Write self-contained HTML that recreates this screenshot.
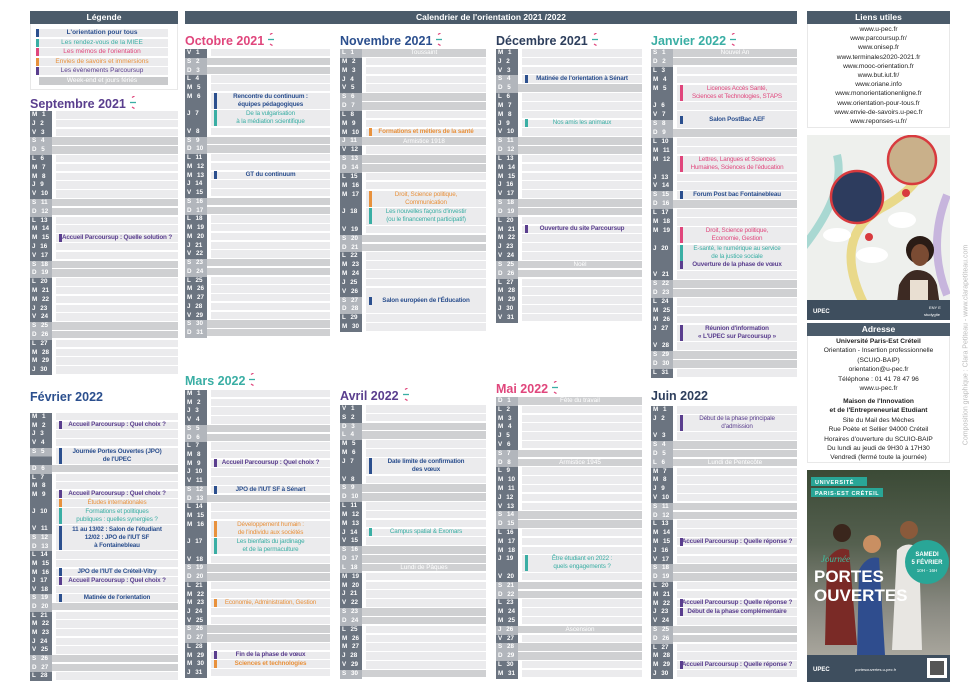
<!DOCTYPE html>
<html><head><meta charset="utf-8"><style>
*{margin:0;padding:0;box-sizing:border-box}
body{width:980px;height:693px;background:#fff;position:relative;overflow:hidden;font-family:"Liberation Sans",sans-serif}
.hd{position:absolute;height:13px;background:#4b5b6a;color:#fff;font:bold 8.5px/13px "Liberation Sans",sans-serif;text-align:center}
.m{position:absolute}
.r{display:flex;height:var(--r)}
.r.d{height:calc(var(--r)*2)}
.r.t{height:calc(var(--r)*3)}
.r b{width:22px;flex:none;background:#6b7480;color:#fff;font:bold 6.3px/var(--r) "Liberation Sans",sans-serif;padding-left:2px;word-spacing:3px;white-space:pre}
.r i{flex:1;margin-left:4px;background:#ebebed;margin-bottom:1.3px;font-style:normal;display:flex;flex-direction:column;justify-content:center;color:#fff;text-align:center;font:6.3px/7px "Liberation Sans",sans-serif}
.r.e b,.r.w b{background:#b2b6bc}
.r.e i{margin-left:0;background:#cfd0d2}
em{display:block;position:relative;font:bold 6.3px/8px "Liberation Sans",sans-serif;font-style:normal;letter-spacing:-.15px;white-space:nowrap;text-align:center}
em:before{content:"";position:absolute;left:3px;top:0;bottom:0;width:2.5px;background:currentColor}
.c1{color:#2b4f8e}.c2{color:#3aaea4}.c3{color:#e0467c}.c4{color:#e8913c}.c5{color:#5a3e8e}
.o{position:absolute;background:#ebebed;display:flex;flex-direction:column;justify-content:center}
.ti{position:absolute;font:bold 12.5px "Liberation Sans",sans-serif;white-space:nowrap}
.ti svg{vertical-align:-1px;margin-left:3px}
.lg{position:absolute;left:36px;width:132px;height:8px;background:#ebebed;text-align:center;font:bold 6.5px/8px "Liberation Sans",sans-serif}
.lg:before{content:"";position:absolute;left:0;top:0;width:2.5px;height:8px;background:currentColor}
.txt{position:absolute;text-align:center;font:6.6px/9.3px "Liberation Sans",sans-serif;color:#222}
.vt{position:absolute;left:966px;top:345px;transform:translate(-50%,-50%) rotate(-90deg);white-space:nowrap;font:7px "Liberation Sans",sans-serif;color:#bcbcbc}
</style></head><body>

<div class="hd" style="left:30px;top:11px;width:148px">Légende</div>
<div style="position:absolute;left:30px;top:24px;width:148px;height:66px;border:1.5px solid #e8e8e8;border-top:none"></div>
<div class="lg c1" style="top:29px">L'orientation pour tous</div>
<div class="lg c2" style="top:38.5px;font-weight:normal">Les rendez-vous de la MIEE</div>
<div class="lg c3" style="top:48px;font-weight:normal">Les mémos de l'orientation</div>
<div class="lg c4" style="top:57.5px;font-weight:normal">Envies de savoirs et immersions</div>
<div class="lg c5" style="top:67px;font-weight:normal">Les évènements Parcoursup</div>
<div class="lg" style="top:76.5px;background:#c9cacc;color:#fff;font-weight:normal">Week-end et jours fériés</div>
<div class="hd" style="left:185px;top:11px;width:612px">Calendrier de l'orientation 2021 /2022</div>

<svg width="0" height="0" style="position:absolute"><defs><g id="sq"><path d="M3 1.5l2.5-1.5" stroke="#e0467c" stroke-width="1.3"/><path d="M1 6.5h6" stroke="#3aaea4" stroke-width="1.3"/><path d="M3 11l2.5 1.5" stroke="#e0467c" stroke-width="1.3"/></g></defs></svg>

<!-- SEPTEMBRE -->
<div class="ti c5" style="left:30px;top:96px">Septembre 2021<svg width="9" height="13"><use href="#sq"/></svg></div>
<div class="m" style="left:30px;top:111px;width:148px;--r:8.8px">
<div class="r"><b>M 1</b><i></i></div><div class="r"><b>J 2</b><i></i></div><div class="r"><b>V 3</b><i></i></div>
<div class="r e"><b>S 4</b><i></i></div><div class="r e"><b>D 5</b><i></i></div>
<div class="r"><b>L 6</b><i></i></div><div class="r"><b>M 7</b><i></i></div><div class="r"><b>M 8</b><i></i></div><div class="r"><b>J 9</b><i></i></div><div class="r"><b>V 10</b><i></i></div>
<div class="r e"><b>S 11</b><i></i></div><div class="r e"><b>D 12</b><i></i></div>
<div class="r"><b>L 13</b><i></i></div><div class="r"><b>M 14</b><i></i></div><div class="r"><b>M 15</b><i><em class="c5">Accueil Parcoursup : Quelle solution ?</em></i></div><div class="r"><b>J 16</b><i></i></div><div class="r"><b>V 17</b><i></i></div>
<div class="r e"><b>S 18</b><i></i></div><div class="r e"><b>D 19</b><i></i></div>
<div class="r"><b>L 20</b><i></i></div><div class="r"><b>M 21</b><i></i></div><div class="r"><b>M 22</b><i></i></div><div class="r"><b>J 23</b><i></i></div><div class="r"><b>V 24</b><i></i></div>
<div class="r e"><b>S 25</b><i></i></div><div class="r e"><b>D 26</b><i></i></div>
<div class="r"><b>L 27</b><i></i></div><div class="r"><b>M 28</b><i></i></div><div class="r"><b>M 29</b><i></i></div><div class="r"><b>J 30</b><i></i></div>
</div>

<!-- OCTOBRE -->
<div class="ti c3" style="left:185px;top:33px">Octobre 2021<svg width="9" height="13"><use href="#sq"/></svg></div>
<div class="m" style="left:185px;top:49px;width:145px;--r:8.76px">
<div class="r"><b>V 1</b><i></i></div><div class="r e"><b>S 2</b><i></i></div><div class="r e"><b>D 3</b><i></i></div>
<div class="r"><b>L 4</b><i></i></div><div class="r"><b>M 5</b><i></i></div>
<div class="r d"><b>M 6</b><i><em class="c1">Rencontre du continuum :<br>équipes pédagogiques</em></i></div>
<div class="r d"><b>J 7</b><i><em class="c2" style="font-weight:normal">De la vulgarisation<br>à la médiation scientifique</em></i></div>
<div class="r"><b>V 8</b><i></i></div><div class="r e"><b>S 9</b><i></i></div><div class="r e"><b>D 10</b><i></i></div>
<div class="r"><b>L 11</b><i></i></div><div class="r"><b>M 12</b><i></i></div><div class="r"><b>M 13</b><i><em class="c1">GT du continuum</em></i></div><div class="r"><b>J 14</b><i></i></div><div class="r"><b>V 15</b><i></i></div>
<div class="r e"><b>S 16</b><i></i></div><div class="r e"><b>D 17</b><i></i></div>
<div class="r"><b>L 18</b><i></i></div><div class="r"><b>M 19</b><i></i></div><div class="r"><b>M 20</b><i></i></div><div class="r"><b>J 21</b><i></i></div><div class="r"><b>V 22</b><i></i></div>
<div class="r e"><b>S 23</b><i></i></div><div class="r e"><b>D 24</b><i></i></div>
<div class="r"><b>L 25</b><i></i></div><div class="r"><b>M 26</b><i></i></div><div class="r"><b>M 27</b><i></i></div><div class="r"><b>J 28</b><i></i></div><div class="r"><b>V 29</b><i></i></div>
<div class="r e"><b>S 30</b><i></i></div><div class="r e"><b>D 31</b><i></i></div>
</div>

<!-- NOVEMBRE -->
<div class="ti c1" style="left:340px;top:33px">Novembre 2021<svg width="9" height="13"><use href="#sq"/></svg></div>
<div class="m" style="left:340px;top:49px;width:146px;--r:8.85px">
<div class="r e"><b>L 1</b><i>Toussaint</i></div>
<div class="r"><b>M 2</b><i></i></div><div class="r"><b>M 3</b><i></i></div><div class="r"><b>J 4</b><i></i></div><div class="r"><b>V 5</b><i></i></div>
<div class="r e"><b>S 6</b><i></i></div><div class="r e"><b>D 7</b><i></i></div>
<div class="r"><b>L 8</b><i></i></div><div class="r"><b>M 9</b><i></i></div><div class="r"><b>M 10</b><i><em class="c4">Formations et métiers de la santé</em></i></div>
<div class="r e"><b>J 11</b><i>Armistice 1918</i></div><div class="r"><b>V 12</b><i></i></div>
<div class="r e"><b>S 13</b><i></i></div><div class="r e"><b>D 14</b><i></i></div>
<div class="r"><b>L 15</b><i></i></div><div class="r"><b>M 16</b><i></i></div>
<div class="r d"><b>M 17</b><i><em class="c4" style="font-weight:normal">Droit, Science politique,<br>Communication</em></i></div>
<div class="r d"><b>J 18</b><i><em class="c2" style="font-weight:normal">Les nouvelles façons d'investir<br>(ou le financement participatif)</em></i></div>
<div class="r"><b>V 19</b><i></i></div><div class="r e"><b>S 20</b><i></i></div><div class="r e"><b>D 21</b><i></i></div>
<div class="r"><b>L 22</b><i></i></div><div class="r"><b>M 23</b><i></i></div><div class="r"><b>M 24</b><i></i></div><div class="r"><b>J 25</b><i></i></div><div class="r"><b>V 26</b><i></i></div>
<div class="r w"><b>S 27</b><i></i></div><div class="r w"><b>D 28</b><i></i></div>
<div class="r"><b>L 29</b><i></i></div><div class="r"><b>M 30</b><i></i></div>
<div class="o" style="left:26px;right:0;top:238.95px;height:25.3px"><em class="c1">Salon européen de l'Éducation</em></div>
</div>

<!-- DECEMBRE -->
<div class="ti" style="left:496px;top:33px;color:#2d3e5c">Décembre 2021<svg width="9" height="13"><use href="#sq"/></svg></div>
<div class="m" style="left:496px;top:49px;width:146px;--r:8.84px">
<div class="r"><b>M 1</b><i></i></div><div class="r"><b>J 2</b><i></i></div><div class="r"><b>V 3</b><i></i></div>
<div class="r w"><b>S 4</b><i><em class="c1">Matinée de l'orientation à Sénart</em></i></div><div class="r e"><b>D 5</b><i></i></div>
<div class="r"><b>L 6</b><i></i></div><div class="r"><b>M 7</b><i></i></div><div class="r"><b>M 8</b><i></i></div><div class="r"><b>J 9</b><i><em class="c2" style="font-weight:normal">Nos amis les animaux</em></i></div><div class="r"><b>V 10</b><i></i></div>
<div class="r e"><b>S 11</b><i></i></div><div class="r e"><b>D 12</b><i></i></div>
<div class="r"><b>L 13</b><i></i></div><div class="r"><b>M 14</b><i></i></div><div class="r"><b>M 15</b><i></i></div><div class="r"><b>J 16</b><i></i></div><div class="r"><b>V 17</b><i></i></div>
<div class="r e"><b>S 18</b><i></i></div><div class="r e"><b>D 19</b><i></i></div>
<div class="r"><b>L 20</b><i></i></div><div class="r"><b>M 21</b><i><em class="c5">Ouverture du site Parcoursup</em></i></div><div class="r"><b>M 22</b><i></i></div><div class="r"><b>J 23</b><i></i></div><div class="r"><b>V 24</b><i></i></div>
<div class="r e"><b>S 25</b><i>Noël</i></div><div class="r e"><b>D 26</b><i></i></div>
<div class="r"><b>L 27</b><i></i></div><div class="r"><b>M 28</b><i></i></div><div class="r"><b>M 29</b><i></i></div><div class="r"><b>J 30</b><i></i></div><div class="r"><b>V 31</b><i></i></div>
</div>

<!-- JANVIER -->
<div class="ti c2" style="left:651px;top:33px">Janvier 2022<svg width="9" height="13"><use href="#sq"/></svg></div>
<div class="m" style="left:651px;top:49px;width:146px;--r:8.9px">
<div class="r e"><b>S 1</b><i>Nouvel An</i></div><div class="r e"><b>D 2</b><i></i></div>
<div class="r"><b>L 3</b><i></i></div><div class="r"><b>M 4</b><i></i></div>
<div class="r d"><b>M 5</b><i><em class="c3" style="font-weight:normal">Licences Accès Santé,<br>Sciences et Technologies, STAPS</em></i></div>
<div class="r"><b>J 6</b><i></i></div><div class="r"><b>V 7</b><i></i></div><div class="r w"><b>S 8</b><i></i></div><div class="r e"><b>D 9</b><i></i></div>
<div class="r"><b>L 10</b><i></i></div><div class="r"><b>M 11</b><i></i></div>
<div class="r d"><b>M 12</b><i><em class="c3" style="font-weight:normal">Lettres, Langues et Sciences<br>Humaines, Sciences de l'éducation</em></i></div>
<div class="r"><b>J 13</b><i></i></div><div class="r"><b>V 14</b><i></i></div>
<div class="r w"><b>S 15</b><i><em class="c1">Forum Post bac Fontainebleau</em></i></div><div class="r e"><b>D 16</b><i></i></div>
<div class="r"><b>L 17</b><i></i></div><div class="r"><b>M 18</b><i></i></div>
<div class="r d"><b>M 19</b><i><em class="c3" style="font-weight:normal">Droit, Science politique,<br>Economie, Gestion</em></i></div>
<div class="r t"><b>J 20</b><i><em class="c2" style="font-weight:normal">E-santé, le numérique au service<br>de la justice sociale</em><em class="c5">Ouverture de la phase de vœux</em></i></div>
<div class="r"><b>V 21</b><i></i></div><div class="r e"><b>S 22</b><i></i></div><div class="r e"><b>D 23</b><i></i></div>
<div class="r"><b>L 24</b><i></i></div><div class="r"><b>M 25</b><i></i></div><div class="r"><b>M 26</b><i></i></div>
<div class="r d"><b>J 27</b><i><em class="c5">Réunion d'information<br>« L'UPEC sur Parcoursup »</em></i></div>
<div class="r"><b>V 28</b><i></i></div><div class="r e"><b>S 29</b><i></i></div><div class="r e"><b>D 30</b><i></i></div><div class="r"><b>L 31</b><i></i></div>
<div class="o" style="left:26px;right:0;top:62.3px;height:16.5px"><em class="c1">Salon PostBac AEF</em></div>
</div>

<!-- FEVRIER -->
<div class="ti c1" style="left:30px;top:390px">Février 2022</div>
<div class="m" style="left:30px;top:413px;width:148px;--r:8.65px">
<div class="r"><b>M 1</b><i></i></div><div class="r"><b>M 2</b><i><em class="c5">Accueil Parcoursup : Quel choix ?</em></i></div><div class="r"><b>J 3</b><i></i></div><div class="r"><b>V 4</b><i></i></div>
<div class="r d w"><b style="background:linear-gradient(#b2b6bc 50%,#6b7480 50%)">S 5</b><i><em class="c1">Journée Portes Ouvertes (JPO)<br>de l'UPEC</em></i></div>
<div class="r e"><b>D 6</b><i></i></div>
<div class="r"><b>L 7</b><i></i></div><div class="r"><b>M 8</b><i></i></div><div class="r"><b>M 9</b><i><em class="c5">Accueil Parcoursup : Quel choix ?</em></i></div>
<div class="r"><b> </b><i><em class="c4" style="font-weight:normal">Études internationales</em></i></div>
<div class="r d"><b>J 10</b><i><em class="c2" style="font-weight:normal">Formations et politiques<br>publiques : quelles synergies ?</em></i></div>
<div class="r"><b>V 11</b><i></i></div><div class="r w"><b>S 12</b><i></i></div><div class="r w"><b>D 13</b><i></i></div>
<div class="r"><b>L 14</b><i></i></div><div class="r"><b>M 15</b><i></i></div><div class="r"><b>M 16</b><i><em class="c1">JPO de l'IUT de Créteil-Vitry</em></i></div><div class="r"><b>J 17</b><i><em class="c5">Accueil Parcoursup : Quel choix ?</em></i></div><div class="r"><b>V 18</b><i></i></div>
<div class="r w"><b>S 19</b><i><em class="c1">Matinée de l'orientation</em></i></div><div class="r e"><b>D 20</b><i></i></div>
<div class="r"><b>L 21</b><i></i></div><div class="r"><b>M 22</b><i></i></div><div class="r"><b>M 23</b><i></i></div><div class="r"><b>J 24</b><i></i></div><div class="r"><b>V 25</b><i></i></div>
<div class="r e"><b>S 26</b><i></i></div><div class="r e"><b>D 27</b><i></i></div><div class="r"><b>L 28</b><i></i></div>
<div class="o" style="left:26px;right:0;top:112.45px;height:24.6px"><em class="c1">11 au 13/02 : Salon de l'étudiant<br>12/02 : JPO de l'IUT SF<br>à Fontainebleau</em></div>
</div>

<!-- MARS -->
<div class="ti c2" style="left:185px;top:373px">Mars 2022<svg width="9" height="13"><use href="#sq"/></svg></div>
<div class="m" style="left:185px;top:390px;width:145px;--r:8.73px">
<div class="r"><b>M 1</b><i></i></div><div class="r"><b>M 2</b><i></i></div><div class="r"><b>J 3</b><i></i></div><div class="r"><b>V 4</b><i></i></div>
<div class="r e"><b>S 5</b><i></i></div><div class="r e"><b>D 6</b><i></i></div>
<div class="r"><b>L 7</b><i></i></div><div class="r"><b>M 8</b><i></i></div><div class="r"><b>M 9</b><i><em class="c5">Accueil Parcoursup : Quel choix ?</em></i></div><div class="r"><b>J 10</b><i></i></div><div class="r"><b>V 11</b><i></i></div>
<div class="r w"><b>S 12</b><i><em class="c1">JPO de l'IUT SF à Sénart</em></i></div><div class="r e"><b>D 13</b><i></i></div>
<div class="r"><b>L 14</b><i></i></div><div class="r"><b>M 15</b><i></i></div>
<div class="r d"><b>M 16</b><i><em class="c4" style="font-weight:normal">Développement humain :<br>de l'individu aux sociétés</em></i></div>
<div class="r d"><b>J 17</b><i><em class="c2" style="font-weight:normal">Les bienfaits du jardinage<br>et de la permaculture</em></i></div>
<div class="r"><b>V 18</b><i></i></div><div class="r e"><b>S 19</b><i></i></div><div class="r e"><b>D 20</b><i></i></div>
<div class="r"><b>L 21</b><i></i></div><div class="r"><b>M 22</b><i></i></div><div class="r"><b>M 23</b><i><em class="c4" style="font-weight:normal">Economie, Administration, Gestion</em></i></div><div class="r"><b>J 24</b><i></i></div><div class="r"><b>V 25</b><i></i></div>
<div class="r e"><b>S 26</b><i></i></div><div class="r e"><b>D 27</b><i></i></div>
<div class="r"><b>L 28</b><i></i></div><div class="r"><b>M 29</b><i><em class="c5">Fin de la phase de vœux</em></i></div><div class="r"><b>M 30</b><i><em class="c4">Sciences et technologies</em></i></div><div class="r"><b>J 31</b><i></i></div>
</div>

<!-- AVRIL -->
<div class="ti c5" style="left:340px;top:388px">Avril 2022<svg width="9" height="13"><use href="#sq"/></svg></div>
<div class="m" style="left:340px;top:405px;width:146px;--r:8.84px">
<div class="r"><b>V 1</b><i></i></div><div class="r"><b>S 2</b><i></i></div><div class="r e"><b>D 3</b><i></i></div><div class="r e"><b>L 4</b><i></i></div>
<div class="r"><b>M 5</b><i></i></div><div class="r"><b>M 6</b><i></i></div>
<div class="r d"><b>J 7</b><i><em class="c1">Date limite de confirmation<br>des vœux</em></i></div>
<div class="r"><b>V 8</b><i></i></div><div class="r e"><b>S 9</b><i></i></div><div class="r e"><b>D 10</b><i></i></div>
<div class="r"><b>L 11</b><i></i></div><div class="r"><b>M 12</b><i></i></div><div class="r"><b>M 13</b><i></i></div><div class="r"><b>J 14</b><i><em class="c2" style="font-weight:normal">Campus spatial &amp; Exomars</em></i></div><div class="r"><b>V 15</b><i></i></div>
<div class="r e"><b>S 16</b><i></i></div><div class="r e"><b>D 17</b><i></i></div><div class="r e"><b>L 18</b><i>Lundi de Pâques</i></div>
<div class="r"><b>M 19</b><i></i></div><div class="r"><b>M 20</b><i></i></div><div class="r"><b>J 21</b><i></i></div><div class="r"><b>V 22</b><i></i></div>
<div class="r e"><b>S 23</b><i></i></div><div class="r e"><b>D 24</b><i></i></div>
<div class="r"><b>L 25</b><i></i></div><div class="r"><b>M 26</b><i></i></div><div class="r"><b>M 27</b><i></i></div><div class="r"><b>J 28</b><i></i></div><div class="r"><b>V 29</b><i></i></div>
<div class="r e"><b>S 30</b><i></i></div>
</div>

<!-- MAI -->
<div class="ti c3" style="left:496px;top:381px">Mai 2022<svg width="9" height="13"><use href="#sq"/></svg></div>
<div class="m" style="left:496px;top:397px;width:146px;--r:8.8px">
<div class="r e"><b>D 1</b><i>Fête du travail</i></div>
<div class="r"><b>L 2</b><i></i></div><div class="r"><b>M 3</b><i></i></div><div class="r"><b>M 4</b><i></i></div><div class="r"><b>J 5</b><i></i></div><div class="r"><b>V 6</b><i></i></div>
<div class="r e"><b>S 7</b><i></i></div><div class="r e"><b>D 8</b><i>Armistice 1945</i></div>
<div class="r"><b>L 9</b><i></i></div><div class="r"><b>M 10</b><i></i></div><div class="r"><b>M 11</b><i></i></div><div class="r"><b>J 12</b><i></i></div><div class="r"><b>V 13</b><i></i></div>
<div class="r e"><b>S 14</b><i></i></div><div class="r e"><b>D 15</b><i></i></div>
<div class="r"><b>L 16</b><i></i></div><div class="r"><b>M 17</b><i></i></div><div class="r"><b>M 18</b><i></i></div>
<div class="r d"><b>J 19</b><i><em class="c2" style="font-weight:normal">Être étudiant en 2022 :<br>quels engagements ?</em></i></div>
<div class="r"><b>V 20</b><i></i></div><div class="r e"><b>S 21</b><i></i></div><div class="r e"><b>D 22</b><i></i></div>
<div class="r"><b>L 23</b><i></i></div><div class="r"><b>M 24</b><i></i></div><div class="r"><b>M 25</b><i></i></div><div class="r e"><b>J 26</b><i>Ascension</i></div><div class="r"><b>V 27</b><i></i></div>
<div class="r e"><b>S 28</b><i></i></div><div class="r e"><b>D 29</b><i></i></div>
<div class="r"><b>L 30</b><i></i></div><div class="r"><b>M 31</b><i></i></div>
</div>

<!-- JUIN -->
<div class="ti" style="left:651px;top:389px;color:#2d3e5c">Juin 2022</div>
<div class="m" style="left:651px;top:406px;width:146px;--r:8.8px">
<div class="r"><b>M 1</b><i></i></div>
<div class="r d"><b>J 2</b><i><em class="c5" style="font-weight:normal">Début de la phase principale<br>d'admission</em></i></div>
<div class="r"><b>V 3</b><i></i></div><div class="r e"><b>S 4</b><i></i></div><div class="r e"><b>D 5</b><i></i></div><div class="r e"><b>L 6</b><i>Lundi de Pentecôte</i></div>
<div class="r"><b>M 7</b><i></i></div><div class="r"><b>M 8</b><i></i></div><div class="r"><b>J 9</b><i></i></div><div class="r"><b>V 10</b><i></i></div>
<div class="r e"><b>S 11</b><i></i></div><div class="r e"><b>D 12</b><i></i></div>
<div class="r"><b>L 13</b><i></i></div><div class="r"><b>M 14</b><i></i></div><div class="r"><b>M 15</b><i><em class="c5">Accueil Parcoursup : Quelle réponse ?</em></i></div><div class="r"><b>J 16</b><i></i></div><div class="r"><b>V 17</b><i></i></div>
<div class="r e"><b>S 18</b><i></i></div><div class="r e"><b>D 19</b><i></i></div>
<div class="r"><b>L 20</b><i></i></div><div class="r"><b>M 21</b><i></i></div><div class="r"><b>M 22</b><i><em class="c5">Accueil Parcoursup : Quelle réponse ?</em></i></div><div class="r"><b>J 23</b><i><em class="c5">Début de la phase complémentaire</em></i></div><div class="r"><b>V 24</b><i></i></div>
<div class="r e"><b>S 25</b><i></i></div><div class="r e"><b>D 26</b><i></i></div>
<div class="r"><b>L 27</b><i></i></div><div class="r"><b>M 28</b><i></i></div><div class="r"><b>M 29</b><i><em class="c5">Accueil Parcoursup : Quelle réponse ?</em></i></div><div class="r"><b>J 30</b><i></i></div>
</div>

<!-- RIGHT PANEL -->
<div class="hd" style="left:807px;top:11px;width:143px">Liens utiles</div>
<div style="position:absolute;left:807px;top:24px;width:143px;height:104px;border:1.5px solid #e8e8e8;border-top:none"></div>
<div class="txt" style="left:807px;top:25px;width:143px;line-height:9.2px">www.u-pec.fr<br>www.parcoursup.fr/<br>www.onisep.fr<br>www.terminales2020-2021.fr<br>www.mooc-orientation.fr<br>www.but.iut.fr/<br>www.oriane.info<br>www.monorientationenligne.fr<br>www.orientation-pour-tous.fr<br>www.envie-de-savoirs.u-pec.fr<br>www.reponses-u.fr/</div>

<div style="position:absolute;left:807px;top:135px;width:143px;height:185px;background:#eef0ed;overflow:hidden">
<svg width="143" height="185">
<path d="M-10 120 Q40 60 30 20" stroke="#a9d8d2" stroke-width="8" fill="none"/>
<path d="M60 175 Q20 100 80 70 Q130 40 110 10" stroke="#e9d98a" stroke-width="9" fill="none"/>
<path d="M140 60 Q120 110 140 160" stroke="#c7b5dd" stroke-width="8" fill="none"/>
<ellipse cx="95" cy="85" rx="14" ry="8" fill="#fff"/><ellipse cx="65" cy="120" rx="16" ry="8" fill="#fff"/><ellipse cx="30" cy="100" rx="14" ry="7" fill="#fff"/>
<circle cx="105" cy="25" r="24" fill="#c9b08a" stroke="#d83a3e" stroke-width="2.5"/>
<circle cx="50" cy="62" r="26" fill="#2d3c5e" stroke="#d83a3e" stroke-width="2.5"/>
<circle cx="99" cy="58" r="4" fill="#d83a3e"/><circle cx="62" cy="102" r="4" fill="#d83a3e"/>
<path d="M88 185 L92 150 Q100 135 110 135 Q125 135 130 150 L135 185Z" fill="#3d2a23"/>
<circle cx="113" cy="115" r="14" fill="#2a1c16"/><ellipse cx="113" cy="120" rx="9" ry="11" fill="#7a4b33"/>
<rect x="103" y="145" width="18" height="40" fill="#e9dfd2"/>
<rect x="0" y="165" width="143" height="20" fill="#3e4e5e"/>
<text x="6" y="178" fill="#fff" font-size="6" font-weight="bold" font-family="Liberation Sans">UPEC</text>
<text x="122" y="174" fill="#fff" font-size="4" font-family="Liberation Sans">ENY E</text>
<text x="117" y="181" fill="#fff" font-size="4" font-family="Liberation Sans">studygite</text>
</svg></div>

<div class="hd" style="left:807px;top:323px;width:143px">Adresse</div>
<div style="position:absolute;left:807px;top:336px;width:143px;height:127px;border:1.5px solid #e8e8e8;border-top:none"></div>
<div class="txt" style="left:807px;top:337px;width:143px;line-height:9.4px"><b>Université Paris-Est Créteil</b><br>Orientation - Insertion professionnelle<br>(SCUIO-BAIP)<br>orientation@u-pec.fr<br>Téléphone : 01 41 78 47 96<br>www.u-pec.fr</div>
<div class="txt" style="left:807px;top:397px;width:143px;line-height:9.4px"><b>Maison de l'Innovation<br>et de l'Entrepreneuriat Etudiant</b><br>Site du Mail des Mèches<br>Rue Poète et Sellier 94000 Créteil<br>Horaires d'ouverture du SCUIO-BAIP<br>Du lundi au jeudi de 9H30 à 17H30<br>Vendredi (fermé toute la journée)</div>

<div style="position:absolute;left:807px;top:470px;width:143px;height:212px;background:linear-gradient(#3b4a36 0%,#55604f 35%,#8a8a82 65%,#b9b5ab 100%);overflow:hidden">
<svg width="143" height="212">
<path d="M18 175 L20 90 Q30 75 42 80 L50 175Z" fill="#7a2a26"/><circle cx="35" cy="63" r="9" fill="#3a261c"/>
<path d="M50 185 L52 100 Q60 85 72 88 L78 185Z" fill="#2f4d8e"/><circle cx="65" cy="74" r="9" fill="#c98f62"/>
<path d="M85 180 L90 80 Q100 70 112 78 L115 180Z" fill="#e8e6e2"/><circle cx="102" cy="60" r="9" fill="#8a5a3b"/>
<rect x="0" y="185" width="143" height="27" fill="#3e4e5e"/>
<rect x="4" y="7" width="56" height="9" fill="#29a697"/><rect x="4" y="18" width="72" height="9" fill="#29a697"/>
<text x="8" y="14" fill="#fff" font-size="5.5" font-weight="bold" font-family="Liberation Sans" letter-spacing=".6">UNIVERSITÉ</text>
<text x="8" y="25" fill="#fff" font-size="5.5" font-weight="bold" font-family="Liberation Sans" letter-spacing=".6">PARIS-EST CRÉTEIL</text>
<circle cx="120" cy="92" r="22" fill="#29a697"/>
<text x="120" y="86" fill="#fff" font-size="6" font-weight="bold" font-family="Liberation Sans" text-anchor="middle">SAMEDI</text>
<text x="120" y="94" fill="#fff" font-size="6" font-weight="bold" font-family="Liberation Sans" text-anchor="middle">5 FÉVRIER</text>
<text x="120" y="102" fill="#fff" font-size="4.5" font-family="Liberation Sans" text-anchor="middle">10H - 16H</text>
<text x="14" y="92" fill="#3fbf9f" font-size="9" font-style="italic" font-family="Liberation Serif">Journée</text>
<text x="7" y="112" fill="#fff" font-size="17" font-weight="bold" font-family="Liberation Sans">PORTES</text>
<text x="7" y="131" fill="#fff" font-size="17" font-weight="bold" font-family="Liberation Sans">OUVERTES</text>
<text x="6" y="201" fill="#fff" font-size="6" font-weight="bold" font-family="Liberation Sans">UPEC</text>
<text x="48" y="201" fill="#fff" font-size="4" font-family="Liberation Sans">portesouvertes.u-pec.fr</text>
<rect x="120" y="188" width="20" height="20" fill="#fff"/><rect x="123" y="191" width="14" height="14" fill="#555"/>
</svg></div>

<div class="vt">Composition graphique : Clara Petiteau - www.clarapetiteau.com</div>
</body></html>
